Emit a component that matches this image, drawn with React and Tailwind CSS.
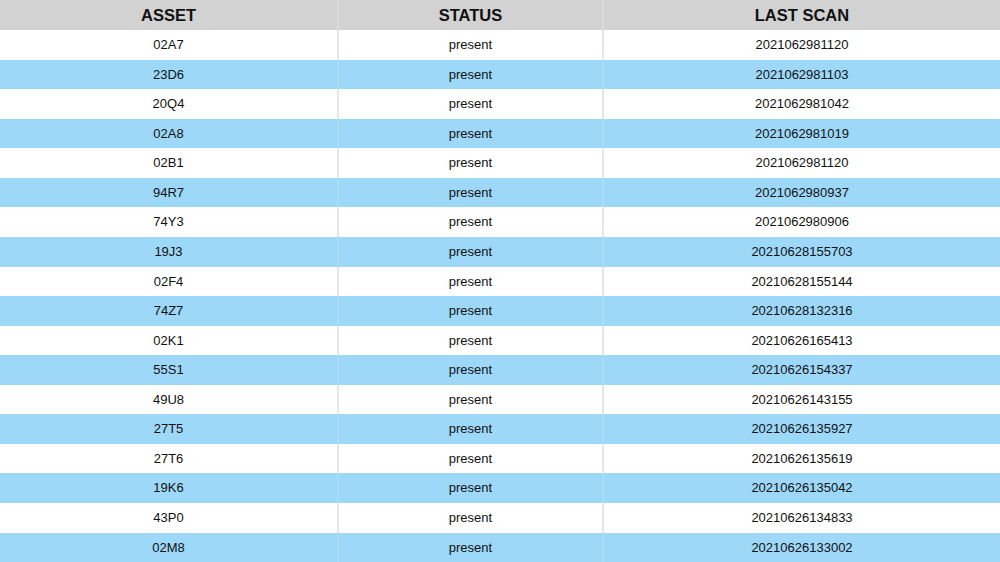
const ROWS = [
  ['02A7', 'present', '2021062981120'],
  ['23D6', 'present', '2021062981103'],
  ['20Q4', 'present', '2021062981042'],
  ['02A8', 'present', '2021062981019'],
  ['02B1', 'present', '2021062981120'],
  ['94R7', 'present', '2021062980937'],
  ['74Y3', 'present', '2021062980906'],
  ['19J3', 'present', '20210628155703'],
  ['02F4', 'present', '20210628155144'],
  ['74Z7', 'present', '20210628132316'],
  ['02K1', 'present', '20210626165413'],
  ['55S1', 'present', '20210626154337'],
  ['49U8', 'present', '20210626143155'],
  ['27T5', 'present', '20210626135927'],
  ['27T6', 'present', '20210626135619'],
  ['19K6', 'present', '20210626135042'],
  ['43P0', 'present', '20210626134833'],
  ['02M8', 'present', '20210626133002'],
];

// 세 칸짜리 행. 칸 사이 구분선은 두 번째/세 번째 칸의 왼쪽 테두리.
function Row({ cells, className, cellClass, lineClass }) {
  return (
    <div className={`grid grid-cols-[337px_265px_1fr] ${className}`}>
      {cells.map((c, i) => (
        <div
          key={i}
          className={`flex items-center justify-center ${cellClass} ${i > 0 ? `border-l-2 ${lineClass}` : ''}`}
        >
          {c}
        </div>
      ))}
    </div>
  );
}

export default function App() {
  return (
    <div
      className="w-[1000px] h-[562px] flex flex-col bg-white text-[#111] overflow-hidden"
      style={{ fontFamily: '"Liberation Sans", Arial, sans-serif' }}
    >
      <Row
        cells={['ASSET', 'STATUS', 'LAST SCAN']}
        className="h-[30px] shrink-0 bg-[#d2d2d2]"
        cellClass="text-[16.5px] font-bold"
        lineClass="border-[#dadada]"
      />
      {ROWS.map((r, i) => (
        <Row
          key={r[0] + i}
          cells={r}
          className={`flex-1 ${i % 2 ? 'bg-[#9dd8f9]' : 'bg-white'}`}
          cellClass="text-[13px]"
          lineClass={i % 2 ? 'border-[#a8dcf9]' : 'border-[#e6e6e6]'}
        />
      ))}
    </div>
  );
}
